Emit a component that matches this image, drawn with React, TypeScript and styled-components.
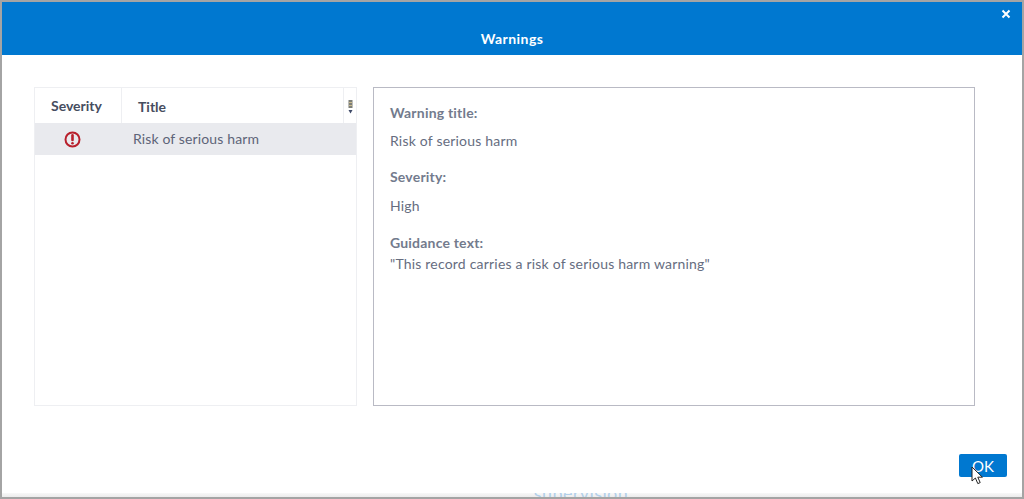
import React from "react";
import styled, { createGlobalStyle } from "styled-components";

const Global = createGlobalStyle`
  html, body { margin: 0; padding: 0; background: #fff; overflow: hidden; }
  body { font-family: "Lato", "Open Sans", sans-serif; }
  * { box-sizing: border-box; }
`;

const Frame = styled.div`
  width: 1024px;
  height: 499px;
  display: flex;
  flex-direction: column;
  border: 2px solid #a4a4a4;
  border-bottom: none;
  background: #fff;
  overflow: hidden;
`;

const Header = styled.header`
  position: relative;
  height: 53px;
  flex: none;
  background: #0078d0;
  display: flex;
  align-items: flex-end;
  justify-content: center;
  padding-bottom: 8px;
`;

const HeaderTitle = styled.h1`
  margin: 0;
  font-size: 14px;
  line-height: 17px;
  font-weight: 700;
  letter-spacing: 0.45px;
  color: #fff;
`;

const Close = styled.button`
  position: absolute;
  top: 7px;
  right: 11px;
  width: 10px;
  height: 10px;
  padding: 0;
  border: 0;
  background: none;
  display: flex;
`;

const Body = styled.main`
  flex: 1;
  min-height: 0;
  display: flex;
  gap: 16px;
  padding: 32px 0 0 32px;
`;

const TablePanel = styled.section`
  width: 323px;
  height: 319px;
  border: 1px solid #eeeff2;
  display: flex;
  flex-direction: column;
`;

const HeadRow = styled.div`
  height: 35px;
  display: flex;
  flex: none;
`;

const HeadCell = styled.div<{ $w?: number; $last?: boolean }>`
  ${(p) => (p.$w ? `width: ${p.$w}px; flex: none;` : "flex: 1;")}
  display: flex;
  align-items: center;
  border-right: ${(p) => (p.$last ? "none" : "1px solid #eeeff2")};
  font-size: 14px;
  font-weight: 700;
  color: #464d60;
`;

const SeverityLabel = styled.span`
  margin: 0 0 1px 16px;
`;

const TitleLabel = styled.span`
  margin: 1px 0 0 16px;
`;

const Row = styled.div`
  height: 32px;
  flex: none;
  background: #e9eaee;
  display: flex;
  align-items: center;
`;

const IconCell = styled.div`
  width: 87px;
  display: flex;
  justify-content: center;
  padding-right: 12px;
`;

const RowText = styled.span`
  margin: 0 0 1px 11px;
  font-size: 14px;
  color: #5d6478;
  letter-spacing: 0.13px;
`;

const DetailPanel = styled.section`
  width: 602px;
  height: 319px;
  border: 1px solid #b9bac4;
  padding: 16px 16px 0;
  display: flex;
  flex-direction: column;
`;

const Label = styled.div<{ $gap: number }>`
  font-size: 14px;
  line-height: 18px;
  font-weight: 700;
  letter-spacing: 0.2px;
  color: #737b8d;
  margin-bottom: ${(p) => p.$gap}px;
`;

const Value = styled.div<{ $gap: number }>`
  font-size: 14px;
  line-height: 18px;
  color: #666d7f;
  letter-spacing: 0.2px;
  margin-bottom: ${(p) => p.$gap}px;
`;

const Footer = styled.footer`
  flex: none;
  height: 45px;
  display: flex;
  justify-content: flex-end;
  align-items: flex-start;
  padding: 11px 15px 0 0;
`;

const OkButton = styled.button`
  position: relative;
  width: 48px;
  height: 23px;
  border: 0;
  border-radius: 2px;
  background: #0078d0;
  color: #fff;
  font-family: inherit;
  font-size: 15px;
  padding: 0;
`;

const Cursor = styled.svg`
  position: absolute;
  left: 12px;
  top: 12px;
`;

const Strip = styled.div`
  flex: none;
  height: 11px;
  background: #fff;
  display: flex;
  align-items: flex-end;
  overflow: hidden;
`;

const Behind = styled.div`
  width: 100%;
  height: 6px;
  background: linear-gradient(#f8f8f8, #ececec);
  border-bottom: 2px solid #a4a4a4;
  display: flex;
  justify-content: center;
  overflow: hidden;
`;

const BehindText = styled.span`
  font-size: 18px;
  line-height: 14px;
  margin-top: -7px;
  margin-left: 138px;
  letter-spacing: 0.4px;
  color: #b3d0ea;
`;

const Sort = () => (
  <svg width="5" height="14" viewBox="0 0 5 14" style={{ marginLeft: 4, marginTop: 2 }}>
    <rect x="0.5" y="0" width="4" height="8" fill="#7d7f78" />
    <rect x="1" y="2" width="3" height="1" fill="#c9b98c" />
    <rect x="1" y="5" width="3" height="1" fill="#c9b98c" />
    <path d="M0.5 10h4l-2 3.5z" fill="#3f4a68" />
  </svg>
);

const WarnIcon = () => (
  <svg width="17" height="17" viewBox="0 0 17 17">
    <circle cx="8.5" cy="8.5" r="7" fill="none" stroke="#b8202c" strokeWidth="2" />
    <path d="M8.5 4.4v4.6" stroke="#b8202c" strokeWidth="2.6" strokeLinecap="round" />
    <circle cx="8.5" cy="12.2" r="1.3" fill="#b8202c" />
  </svg>
);

export default function App() {
  return (
    <Frame>
      <Global />
      <Header>
        <HeaderTitle>Warnings</HeaderTitle>
        <Close aria-label="Close">
          <svg width="10" height="10" viewBox="0 0 10 10">
            <path d="M1.5 1.5l7 7M8.5 1.5l-7 7" stroke="#fff" strokeWidth="2" />
          </svg>
        </Close>
      </Header>
      <Body>
        <TablePanel>
          <HeadRow>
            <HeadCell $w={87}><SeverityLabel>Severity</SeverityLabel></HeadCell>
            <HeadCell><TitleLabel>Title</TitleLabel></HeadCell>
            <HeadCell $w={12} $last><Sort /></HeadCell>
          </HeadRow>
          <Row>
            <IconCell><WarnIcon /></IconCell>
            <RowText>Risk of serious harm</RowText>
          </Row>
        </TablePanel>
        <DetailPanel>
          <Label $gap={10}>Warning title:</Label>
          <Value $gap={18}>Risk of serious harm</Value>
          <Label $gap={11}>Severity:</Label>
          <Value $gap={19}>High</Value>
          <Label $gap={3}>Guidance text:</Label>
          <Value $gap={0}>"This record carries a risk of serious harm warning"</Value>
        </DetailPanel>
      </Body>
      <Footer>
        <OkButton>
          OK
          <Cursor width="14" height="20" viewBox="0 0 14 20">
            <path d="M1 1v14l3.4-3 2.4 5.6 2.4-1-2.4-5.4h4.6z" fill="#fff" stroke="#222" strokeWidth="1" />
          </Cursor>
        </OkButton>
      </Footer>
      <Strip>
        <Behind><BehindText>supervision</BehindText></Behind>
      </Strip>
    </Frame>
  );
}
